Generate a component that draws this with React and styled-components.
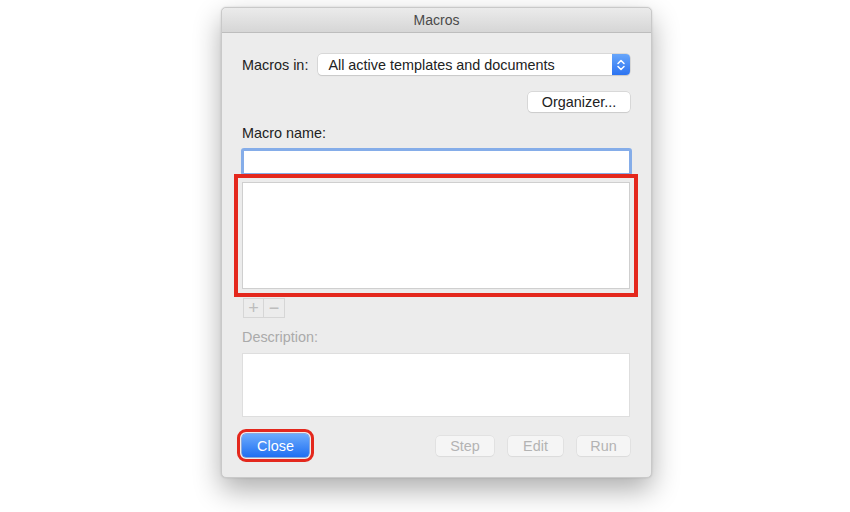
import React from 'react';
import styled, { createGlobalStyle, css } from 'styled-components';

const GlobalStyle = createGlobalStyle`
  html, body {
    margin: 0;
    padding: 0;
    background: #ffffff;
  }
  body {
    font-family: "Liberation Sans", Arial, sans-serif;
    -webkit-font-smoothing: antialiased;
  }
`;

const Page = styled.div`
  width: 850px;
  height: 512px;
  padding: 7px 0 0 221px;
  box-sizing: border-box;
  overflow: hidden;
`;

const Window = styled.div`
  width: 431px;
  height: 471px;
  background: #ececec;
  border-radius: 5px;
  border: 1px solid #c9c9c9;
  box-sizing: border-box;
  box-shadow: 0 12px 28px rgba(0, 0, 0, 0.32), 0 0 2px rgba(0, 0, 0, 0.15);
  display: flex;
  flex-direction: column;
`;

const TitleBar = styled.div`
  height: 24px;
  flex: none;
  display: flex;
  align-items: center;
  justify-content: center;
  background: linear-gradient(#ebebeb, #d6d6d6);
  border-bottom: 1px solid #bdbdbd;
  border-radius: 5px 5px 0 0;
  font-size: 14px;
  color: #4a4a4a;
`;

const Body = styled.div`
  display: flex;
  flex-direction: column;
  padding: 21px 21px 0 20px;
  font-size: 14.4px;
  color: #222;
`;

const Row = styled.div`
  display: flex;
  align-items: center;
  justify-content: ${p => p.$justify || 'flex-start'};
  margin-top: ${p => p.$top || 0}px;
`;

const Label = styled.div`
  font-size: 14.4px;
  color: ${p => (p.$disabled ? '#aaaaaa' : '#222')};
  margin-top: ${p => p.$top || 0}px;
  line-height: 16px;
`;

const Popup = styled.div`
  margin-left: 10px;
  flex: 1;
  height: 21px;
  display: flex;
  align-items: stretch;
  background: #fff;
  border-radius: 4px;
  box-shadow: 0 0 0 0.5px #c4c4c4, 0 1px 1px rgba(0, 0, 0, 0.12);
`;

const PopupText = styled.div`
  flex: 1;
  padding-left: 10px;
  display: flex;
  align-items: center;
  font-size: 14.4px;
`;

const Stepper = styled.div`
  width: 18px;
  border-radius: 0 4px 4px 0;
  background: linear-gradient(#67a6fb, #2c73f1);
  display: flex;
  align-items: center;
  justify-content: center;
`;

const PushButton = styled.div`
  height: 20px;
  padding: 0 ${p => p.$pad || 12}px;
  min-width: ${p => p.$width || 0}px;
  box-sizing: border-box;
  display: flex;
  align-items: center;
  justify-content: center;
  border-radius: 4px;
  font-size: 14.4px;
  background: #fff;
  color: #222;
  box-shadow: 0 0 0 0.5px #c4c4c4, 0 1px 1px rgba(0, 0, 0, 0.1);
  ${p =>
    p.$disabled &&
    css`
      background: #f5f5f5;
      color: #b3b3b3;
      box-shadow: 0 0 0 0.5px #d8d8d8, 0 1px 1px rgba(0, 0, 0, 0.05);
    `}
  ${p =>
    p.$primary &&
    css`
      height: 23px;
      background: linear-gradient(#6cabfc, #1f6ff2);
      color: #fff;
      box-shadow: 0 0 0 0.5px #2a66d0;
    `}
  ${p =>
    p.$marked &&
    css`
      outline: 3px solid #e4281d;
      outline-offset: 2px;
    `}
`;

const NameField = styled.div`
  margin-top: 7px;
  height: 28px;
  background: #fff;
  box-sizing: border-box;
  border: 3px solid #85ade9;
  border-radius: 3px;
  margin-left: -1px;
  margin-right: -2px;
`;

const ListBox = styled.div`
  margin-top: 6px;
  height: 107px;
  background: #fff;
  box-sizing: border-box;
  border: 1px solid #cfcfcf;
  outline: 4px solid #e4281d;
  outline-offset: 4px;
`;

const SegGroup = styled.div`
  display: flex;
  margin-top: 9px;
  margin-left: 1px;
`;

const SegButton = styled.div`
  width: 21px;
  height: 20px;
  box-sizing: border-box;
  border: 1px solid #d6d6d6;
  border-left-width: ${p => (p.$first ? 1 : 0)}px;
  display: flex;
  align-items: center;
  justify-content: center;
  color: #bdbdbd;
  font-size: 18px;
  line-height: 1;
`;

const DescBox = styled.div`
  margin-top: 8px;
  height: 64px;
  background: #fff;
  box-sizing: border-box;
  border: 1px solid #dedede;
`;

const ButtonRow = styled.div`
  display: flex;
  align-items: center;
  margin-top: 17px;
  gap: 14px;
`;

const Spacer = styled.div`
  flex: 1;
`;

const Chevrons = () => (
  <svg width="10" height="14" viewBox="0 0 10 14">
    <path d="M2 5.5 L5 2.5 L8 5.5 M2 8.5 L5 11.5 L8 8.5" fill="none" stroke="#fff" strokeWidth="1.5" strokeLinecap="round" strokeLinejoin="round" />
  </svg>
);

export default function App() {
  return (
    <>
      <GlobalStyle />
      <Page>
        <Window>
          <TitleBar>Macros</TitleBar>
          <Body>
            <Row>
              <Label>Macros in:</Label>
              <Popup>
                <PopupText>All active templates and documents</PopupText>
                <Stepper>
                  <Chevrons />
                </Stepper>
              </Popup>
            </Row>
            <Row $justify="flex-end" $top={17}>
              <PushButton $width={102}>Organizer...</PushButton>
            </Row>
            <Label $top={13}>Macro name:</Label>
            <NameField />
            <ListBox />
            <SegGroup>
              <SegButton $first>+</SegButton>
              <SegButton>−</SegButton>
            </SegGroup>
            <Label $disabled $top={11}>Description:</Label>
            <DescBox />
            <ButtonRow>
              <PushButton $primary $marked $width={67}>Close</PushButton>
              <Spacer />
              <PushButton $disabled $width={58}>Step</PushButton>
              <PushButton $disabled $width={55}>Edit</PushButton>
              <PushButton $disabled $width={53}>Run</PushButton>
            </ButtonRow>
          </Body>
        </Window>
      </Page>
    </>
  );
}
